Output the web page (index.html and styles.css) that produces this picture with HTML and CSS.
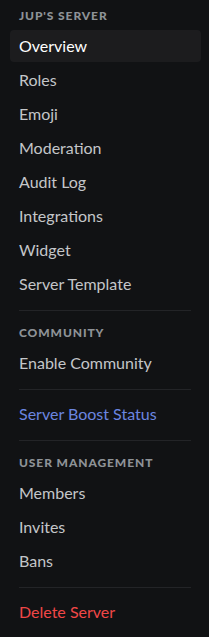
FILE: index.html
```html
<!DOCTYPE html>
<html lang="en">
<head>
    <meta charset="UTF-8">
    <meta name="viewport" content="width=device-width, initial-scale=1.0">
    <title>Server Settings</title>
    <link rel="stylesheet" href="styles.css">
</head>
<body>

<nav class="sidebar">
    <div class="side-header first">Jup's Server</div>
    <div class="side-item selected">Overview</div>
    <div class="side-item">Roles</div>
    <div class="side-item">Emoji</div>
    <div class="side-item">Moderation</div>
    <div class="side-item">Audit Log</div>
    <div class="side-item">Integrations</div>
    <div class="side-item">Widget</div>
    <div class="side-item">Server Template</div>

    <div class="separator"></div>
    <div class="side-header">Community</div>
    <div class="side-item">Enable Community</div>

    <div class="separator"></div>
    <div class="side-item boost">Server Boost Status</div>

    <div class="separator"></div>
    <div class="side-header">User Management</div>
    <div class="side-item">Members</div>
    <div class="side-item">Invites</div>
    <div class="side-item">Bans</div>

    <div class="separator"></div>
    <div class="side-item danger">Delete Server</div>
</nav>

</body>
</html>
```

FILE: styles.css
```css
body {
    margin: 0;
    background-color: #111214;
    font-family: Lato, "Noto Sans", sans-serif;
}
.sidebar {
    display: flex;
    flex-direction: column;
    padding: 0 8px 0 10px;
}
.side-header {
    padding: 6px 9px;
    font-size: 12px;
    line-height: 16px;
    font-weight: 900;
    letter-spacing: 0.9px;
    text-transform: uppercase;
    color: #8e9297;
}
.side-header.first {
    padding-top: 8px;
}
.side-item {
    box-sizing: border-box;
    height: 32px;
    margin-bottom: 2px;
    padding: 0 9px 2px;
    border-radius: 4px;
    display: flex;
    align-items: center;
    font-size: 16px;
    color: #c4c6c9;
    cursor: pointer;
}
.side-item:hover {
    background-color: #18191b;
}
.side-item.selected {
    background-color: #1c1c1e;
    color: #fff;
}
.side-item.boost {
    color: #6b86e0;
}
.side-item.danger {
    color: #f04747;
}
.separator {
    height: 1px;
    margin: 8px 10px 8px 9px;
    background-color: #232427;
}
```
